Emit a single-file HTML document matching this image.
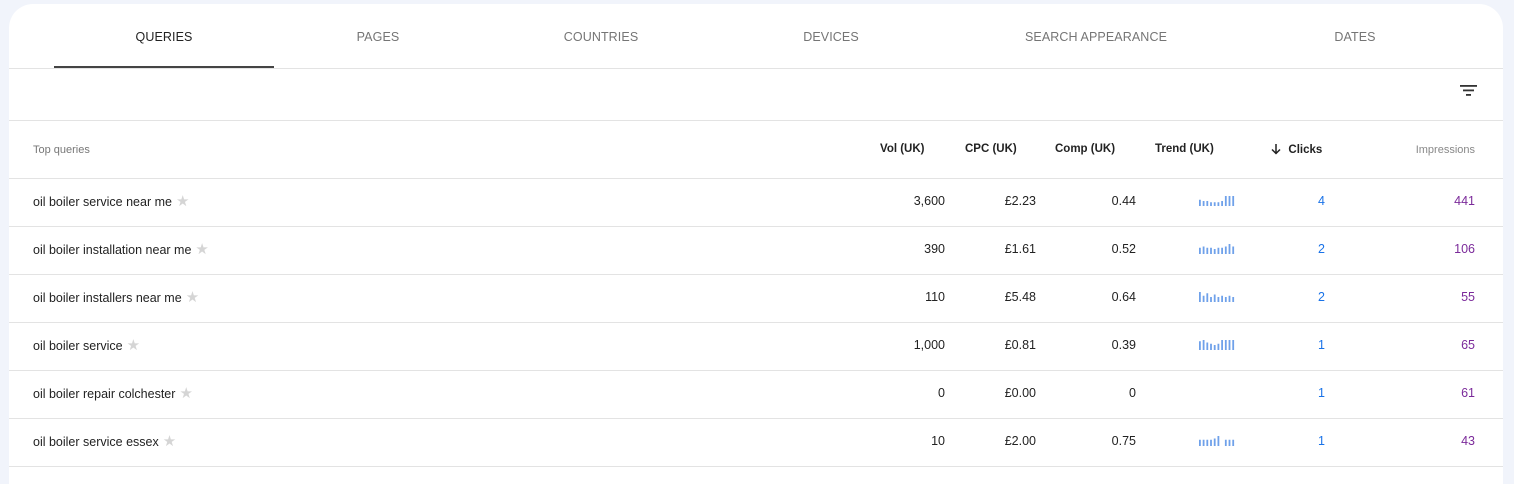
<!DOCTYPE html>
<html><head><style>
body{margin:0;width:1514px;height:474px;background:#f1f4fb;font-family:"Liberation Sans",Arial,sans-serif;overflow:hidden;position:relative}
.card{position:absolute;left:9px;top:4px;width:1494px;height:480px;background:#fff;border-radius:24px 24px 0 0}
.tabs{position:absolute;left:0;top:0;width:1494px;height:64px;border-bottom:1px solid #e3e3e3}
.tab{position:absolute;top:26px;font-size:12.5px;color:#757575;transform:translateX(-50%);letter-spacing:.1px}
.ul{position:absolute;left:45px;top:62px;width:220px;height:2px;background:#444}
.line{position:absolute;left:0;width:1494px;height:1px;background:#e3e3e3}
.t{position:absolute;font-size:12.5px;color:#222;white-space:nowrap;line-height:15px}
.h{position:absolute;font-size:11.5px;font-weight:bold;color:#222;top:143px;white-space:nowrap}
.r{text-align:right}
.star{color:#d5d5d5;font-size:15px;margin-left:4px;line-height:15px}
</style></head><body>
<div class="card">
<div class="tabs">
<div class="tab" style="left:155px;color:#222">QUERIES</div>
<div class="tab" style="left:369px">PAGES</div>
<div class="tab" style="left:592px">COUNTRIES</div>
<div class="tab" style="left:822px">DEVICES</div>
<div class="tab" style="left:1087px">SEARCH APPEARANCE</div>
<div class="tab" style="left:1346px">DATES</div>
<div class="ul"></div>
</div>
<svg style="position:absolute;left:1450px;top:79px" width="20" height="14"><rect x="1" y="2" width="17" height="1.8" fill="#333"/><rect x="4" y="6.5" width="11" height="1.8" fill="#333"/><rect x="7" y="11" width="5" height="1.8" fill="#333"/></svg>
<div class="line" style="top:116px"></div>
<div class="line" style="top:174px"></div>
<div class="line" style="top:222px"></div>
<div class="line" style="top:270px"></div>
<div class="line" style="top:318px"></div>
<div class="line" style="top:366px"></div>
<div class="line" style="top:414px"></div>
<div class="line" style="top:462px"></div>
</div>
<div class="t" style="left:33px;top:143px;font-size:11px;color:#777">Top queries</div>
<div class="h" style="left:880px">Vol (UK)</div>
<div class="h" style="left:965px">CPC (UK)</div>
<div class="h" style="left:1055px">Comp (UK)</div>
<div class="h" style="left:1155px">Trend (UK)</div>
<div class="h" style="left:1270px"><svg width="12" height="12" style="vertical-align:-2px"><path d="M6 1v9M2 6.5l4 4 4-4" stroke="#222" stroke-width="1.5" fill="none"/></svg>&nbsp;&nbsp;Clicks</div>
<div class="h r" style="right:39px;font-weight:normal;color:#888;font-size:11px;top:144px">Impressions</div>

<div id="rows"></div>
<script>
var d=[["oil boiler service near me","3,600","£2.23","0.44",[5,4,4,3,3,3,4,8,8,8],"4","441"],
["oil boiler installation near me","390","£1.61","0.52",[5,6,5,5,4,5,5,6,8,6],"2","106"],
["oil boiler installers near me","110","£5.48","0.64",[8,5,7,4,6,4,5,4,5,4],"2","55"],
["oil boiler service","1,000","£0.81","0.39",[7,8,6,5,4,5,8,8,8,8],"1","65"],
["oil boiler repair colchester","0","£0.00","0",null,"1","61"],
["oil boiler service essex","10","£2.00","0.75",[5,5,5,5,6,8,0,5,5,5],"1","43"]];
var h="";d.forEach(function(r,i){var y=194+48*i;
h+='<div class="t" style="left:33px;top:'+y+'px">'+r[0]+'<span class="star">&#9733;</span></div>';
h+='<div class="t r" style="right:569px;top:'+y+'px">'+r[1]+'</div>';
h+='<div class="t r" style="right:478px;top:'+y+'px">'+r[2]+'</div>';
h+='<div class="t r" style="right:378px;top:'+y+'px">'+r[3]+'</div>';
if(r[4]){var s='<svg style="position:absolute;left:1199px;top:'+(y)+'px" width="38" height="14">';r[4].forEach(function(v,j){s+='<rect x="'+(j*3.7)+'" y="'+(12-v*1.25)+'" width="1.8" height="'+(v*1.25)+'" fill="#6fa1ea"/>'});h+=s+'</svg>';}
h+='<div class="t r" style="right:189px;top:'+y+'px;color:#1a73e8">'+r[5]+'</div>';
h+='<div class="t r" style="right:39px;top:'+y+'px;color:#7b2a9a">'+r[6]+'</div>';});
document.getElementById('rows').innerHTML=h;
</script>
</body></html>
